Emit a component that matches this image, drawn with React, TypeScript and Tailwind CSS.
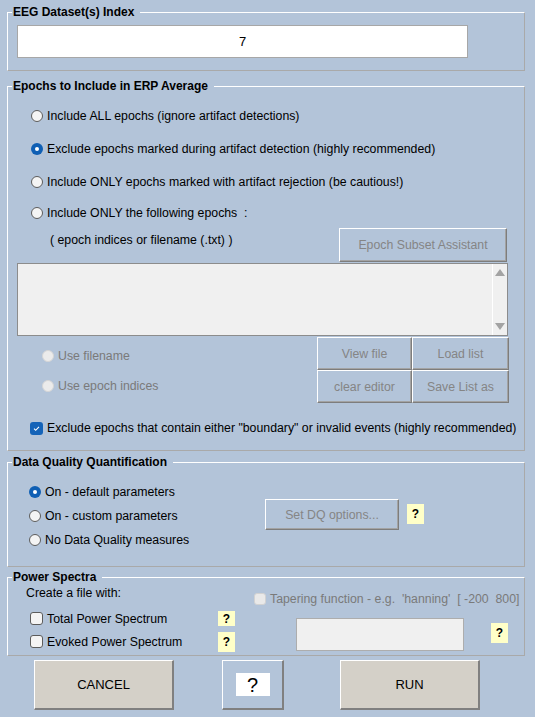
import React from 'react'

type Mark = { checked?: boolean; disabled?: boolean }

const Radio = ({ checked, disabled }: Mark) => {
    if (checked) {
        return (
            <span className="w-[12px] h-[12px] rounded-full bg-[#0f5fb4] flex items-center justify-center shrink-0">
                <span className="w-[4px] h-[4px] rounded-full bg-white" />
            </span>
        )
    }
    if (disabled) {
        return <span className="w-[12px] h-[12px] rounded-full bg-[#ebebeb] border border-[#d6d6d6] shrink-0" />
    }
    return <span className="w-[12px] h-[12px] rounded-full bg-[#f4f4f4] border border-[#5c5c5c] shrink-0" />
}

const Check = ({ checked, disabled }: Mark) => {
    if (checked) {
        return (
            <span className="w-[13px] h-[13px] rounded-[3px] bg-[#1463b8] flex items-center justify-center shrink-0">
                <svg width="9" height="9" viewBox="0 0 9 9">
                    <path d="M2 4.6 L3.7 6.3 L7 2.8" stroke="white" strokeWidth="1.1" fill="none" />
                </svg>
            </span>
        )
    }
    if (disabled) {
        return <span className="w-[12px] h-[12px] rounded-[3px] bg-[#e9e9e9] border border-[#d2d2d2] shrink-0" />
    }
    return <span className="w-[13px] h-[13px] rounded-[3px] bg-[#f4f4f4] border border-[#5c5c5c] shrink-0" />
}

const Help = ({ tall }: { tall?: boolean }) => (
    <span
        className={
            tall
                ? 'w-[17px] h-[20px] bg-[#ffffc8] flex items-center justify-center text-[12px] font-bold shrink-0'
                : 'w-[17px] h-[15px] bg-[#ffffc8] flex items-center justify-center text-[12px] font-bold shrink-0'
        }
    >
        ?
    </span>
)

const Panel = ({ title, className, children }: { title: string; className: string; children: React.ReactNode }) => (
    <fieldset className={`border border-t-white border-l-white border-b-[#a9a9a9] border-r-[#a9a9a9] ${className}`}>
        <legend className="ml-[4px] pl-[1px] pr-[6px] text-[12px] font-bold leading-[13px]">{title}</legend>
        {children}
    </fieldset>
)

const OptionRow = ({ label, checked, h }: { label: string; checked?: boolean; h: string }) => (
    <div className={`flex items-center gap-[4px] ${h}`}>
        <Radio checked={checked} />
        <span className="whitespace-pre">{label}</span>
    </div>
)

const FlatButton = ({ label, className }: { label: string; className: string }) => (
    <div
        className={`flex items-center justify-center text-[#858585] border-t border-l border-t-white border-l-white border-b border-r border-b-[#7d7d7d] border-r-[#7d7d7d] shadow-[inset_-1px_-1px_0_#a3a3a3] ${className}`}
    >
        {label}
    </div>
)

export default function App() {
    return (
        <div className="w-[535px] h-[717px] bg-[#b3c4d9] text-black text-[12.3px] leading-[14px] font-['Liberation_Sans',Arial,sans-serif] overflow-hidden">
            <div className="ml-[7px] pt-[6px] w-[518px]">
                <Panel title="EEG Dataset(s) Index" className="h-[65px]">
                    <div className="ml-[9px] mt-[6px] w-[451px] h-[33px] bg-white border border-[#a7a7a7] flex items-center justify-center text-[13px]">
                        7
                    </div>
                </Panel>

                <Panel title="Epochs to Include in ERP Average" className="mt-[9px] h-[371px]">
                    <div className="mt-[6px] pl-[23px]">
                        <OptionRow h="h-[33px]" label="Include ALL epochs (ignore artifact detections)" />
                        <OptionRow h="h-[33px]" checked label="Exclude epochs marked during artifact detection (highly recommended)" />
                        <OptionRow h="h-[33px]" label="Include ONLY epochs marked with artifact rejection (be cautious!)" />
                        <OptionRow h="h-[30px]" label="Include ONLY the following epochs  :" />
                    </div>
                    <div className="flex h-[34px]">
                        <span className="ml-[42px] mt-[5px]">( epoch indices or filename (.txt) )</span>
                        <FlatButton label="Epoch Subset Assistant" className="ml-auto mr-[17px] w-[168px] h-[34px]" />
                    </div>
                    <div className="ml-[9px] mt-[1px] w-[491px] h-[73px] bg-[#f0f0f0] border border-[#8c8c8c] flex">
                        <div className="flex-1" />
                        <div className="w-[15px] border-l border-white flex flex-col items-center justify-between py-[5px]">
                            <svg width="10" height="7" viewBox="0 0 10 7">
                                <path d="M5 0 L10 7 L0 7 Z" fill="#a3a3a3" />
                            </svg>
                            <svg width="10" height="7" viewBox="0 0 10 7">
                                <path d="M0 0 L10 0 L5 7 Z" fill="#a3a3a3" />
                            </svg>
                        </div>
                    </div>
                    <div className="flex mt-[1px]">
                        <div className="ml-[34px] pt-[4px] text-[#7a7a7a]">
                            <div className="flex items-center gap-[4px] h-[30px]">
                                <Radio disabled />
                                <span>Use filename</span>
                            </div>
                            <div className="flex items-center gap-[4px] h-[30px]">
                                <Radio disabled />
                                <span>Use epoch indices</span>
                            </div>
                        </div>
                        <div className="ml-auto mr-[15px] grid grid-cols-[95px_97px] grid-rows-[33px_33px]">
                            <FlatButton label="View file" className="" />
                            <FlatButton label="Load list" className="" />
                            <FlatButton label="clear editor" className="" />
                            <FlatButton label="Save List as" className="" />
                        </div>
                    </div>
                    <div className="mt-[15px] h-[20px] pl-[22px] flex items-center gap-[4px]">
                        <Check checked />
                        <span className="whitespace-nowrap">Exclude epochs that contain either "boundary" or invalid events (highly recommended)</span>
                    </div>
                </Panel>

                <Panel title="Data Quality Quantification" className="mt-[5px] h-[111px]">
                    <div className="flex">
                        <div className="w-[200px] pl-[21px] pt-[11px]">
                            <OptionRow h="h-[24px]" checked label="On - default parameters" />
                            <OptionRow h="h-[24px]" label="On - custom parameters" />
                            <OptionRow h="h-[24px]" label="No Data Quality measures" />
                        </div>
                        <FlatButton label="Set DQ options..." className="ml-[57px] mt-[30px] w-[134px] h-[31px]" />
                        <div className="ml-[8px] mt-[35px]">
                            <Help tall />
                        </div>
                    </div>
                </Panel>

                <Panel title="Power Spectra" className="mt-[4px] h-[85px]">
                    <div className="flex">
                        <div className="w-[246px]">
                            <div className="h-[18px] pl-[18px] flex items-center">Create a file with:</div>
                            <div className="mt-[5px] pl-[22px]">
                                <div className="flex items-center h-[23px]">
                                    <Check />
                                    <span className="ml-[4px] w-[171px]">Total Power Spectrum</span>
                                    <Help />
                                </div>
                                <div className="flex items-center h-[23px]">
                                    <Check />
                                    <span className="ml-[4px] w-[171px]">Evoked Power Spectrum</span>
                                    <Help tall />
                                </div>
                            </div>
                        </div>
                        <div>
                            <div className="mt-[8px] h-[14px] flex items-center gap-[4px] text-[#7a7a7a]">
                                <Check disabled />
                                <span className="whitespace-pre">Tapering function - e.g.  'hanning'  [ -200  800]</span>
                            </div>
                            <div className="mt-[12px] flex">
                                <div className="ml-[42px] w-[168px] h-[33px] bg-[#f0f0f0] border border-[#adadad]" />
                                <div className="ml-[27px] mt-[5px]">
                                    <Help tall />
                                </div>
                            </div>
                        </div>
                    </div>
                </Panel>
            </div>

            <div className="mt-[4px] pl-[34px] flex text-[13px]">
                <div className="w-[140px] h-[50px] bg-[#d4d0c8] flex items-center justify-center border-t border-l border-t-white border-l-white border-b-2 border-r-2 border-b-[#808080] border-r-[#808080]">
                    CANCEL
                </div>
                <div className="ml-[48px] w-[62px] h-[50px] flex items-center justify-center border-t border-l border-t-white border-l-white border-b-2 border-r-2 border-b-[#808080] border-r-[#808080]">
                    <span className="w-[34px] h-[23px] bg-white flex items-center justify-center text-[20px]">?</span>
                </div>
                <div className="ml-[56px] w-[140px] h-[50px] bg-[#d4d0c8] flex items-center justify-center border-t border-l border-t-white border-l-white border-b-2 border-r-2 border-b-[#808080] border-r-[#808080]">
                    RUN
                </div>
            </div>
        </div>
    )
}
